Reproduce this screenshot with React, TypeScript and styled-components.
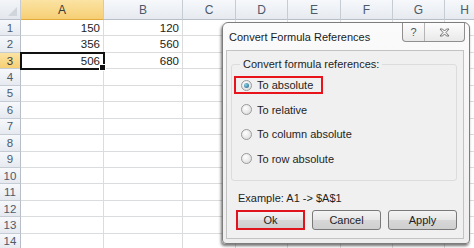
import React from "react";
import styled, { createGlobalStyle, css } from "styled-components";

const GlobalStyle = createGlobalStyle`
  html, body {
    margin: 0;
    padding: 0;
    background: #ffffff;
    overflow: hidden;
  }
  #root {
    width: 474px;
    height: 248px;
    position: relative;
    overflow: hidden;
  }
`;

const COLS = ["A", "B", "C", "D", "E", "F", "G", "H"];
const ROWS = 14;
const DATA: Record<string, string> = {
  A1: "150",
  B1: "120",
  A2: "356",
  B2: "560",
  A3: "506",
  B3: "680",
};

const Sheet = styled.div`
  display: grid;
  grid-template-columns: 21px 83px 79px 53px 52px 53px 52px 52px 40px;
  grid-template-rows: 20px repeat(${ROWS}, 16.45px);
  font-family: "Liberation Sans", Arial, sans-serif;
  font-size: 11px;
  color: #222;
`;

const headerBg = css<{ $active?: boolean }>`
  background: ${p =>
    p.$active
      ? "linear-gradient(#fbe3a4, #f6cf74)"
      : "linear-gradient(#f6f8fb, #e6eaf0)"};
  color: ${p => (p.$active ? "#3a3a3a" : "#4d5a6a")};
`;

const Corner = styled.div`
  background: linear-gradient(#f3f5f8, #e3e7ed);
  border-right: 1px solid #c6ccd4;
  border-bottom: 1px solid #b7bec8;
  position: relative;
  &::after {
    content: "";
    position: absolute;
    right: 3px;
    bottom: 3px;
    border-left: 9px solid transparent;
    border-bottom: 9px solid #d0d5dc;
  }
`;

const ColHead = styled.div<{ $active?: boolean }>`
  ${headerBg};
  display: flex;
  align-items: center;
  justify-content: center;
  font-size: 12px;
  border-right: 1px solid #c6ccd4;
  border-bottom: 1px solid ${p => (p.$active ? "#e3a93b" : "#b7bec8")};
`;

const RowHead = styled.div<{ $active?: boolean }>`
  ${headerBg};
  display: flex;
  align-items: center;
  justify-content: center;
  font-size: 11.5px;
  border-right: 1px solid ${p => (p.$active ? "#e3a93b" : "#b7bec8")};
  border-bottom: 1px solid #c6ccd4;
`;

const Cell = styled.div<{ $selected?: boolean }>`
  display: flex;
  align-items: center;
  justify-content: flex-end;
  padding-right: 3px;
  font-size: 11.5px;
  border-right: 1px solid #dadcdd;
  border-bottom: 1px solid #dadcdd;
  position: relative;
  ${p =>
    p.$selected &&
    css`
      outline: 2px solid #111;
      outline-offset: -1px;
      z-index: 1;
      &::after {
        content: "";
        position: absolute;
        right: -3px;
        bottom: -3px;
        width: 5px;
        height: 5px;
        background: #111;
        border: 1px solid #fff;
      }
    `}
`;

const Dialog = styled.div`
  position: absolute;
  left: 222px;
  top: 22px;
  width: 248px;
  height: 222px;
  box-sizing: border-box;
  border: 1px solid #7d7d7d;
  border-radius: 6px 6px 4px 4px;
  background: linear-gradient(#fbfbfb, #eeeeee);
  box-shadow: -1px 2px 3px rgba(0, 0, 0, 0.55);
  display: flex;
  flex-direction: column;
  padding: 0 5px 4px 3px;
  font-family: "Liberation Sans", Tahoma, sans-serif;
  font-size: 10.5px;
  color: #1e1e1e;
  z-index: 5;
`;

const TitleBar = styled.div`
  height: 26px;
  display: flex;
  align-items: center;
  justify-content: space-between;
  padding-left: 3px;
  padding-top: 1px;
`;

const Title = styled.span`
  font-size: 11px;
  color: #1a1a1a;
`;

const CaptionButtons = styled.div`
  align-self: flex-start;
  display: flex;
  margin-top: -1px;
  margin-right: -1px;
  border: 1px solid #8f8f8f;
  border-top: none;
  border-radius: 0 0 4px 4px;
  background: linear-gradient(#fdfdfd, #e9e9e9);
  height: 18px;
  overflow: hidden;
`;

const CaptionButton = styled.div<{ $wide?: boolean }>`
  width: ${p => (p.$wide ? "39px" : "21px")};
  display: flex;
  align-items: center;
  justify-content: center;
  color: #555;
  font-size: 11px;
  & + & {
    border-left: 1px solid #b5b5b5;
  }
`;

const Client = styled.div`
  flex: 1;
  background: #f0f0f0;
  border: 1px solid #c3c3c3;
  display: flex;
  flex-direction: column;
  padding: 7px 6px 8px 4px;
`;

const Group = styled.fieldset`
  margin: 0;
  padding: 3px 0 6px 2px;
  border: 1px solid #dcdcdc;
  border-radius: 3px;
  height: 112px;
  display: flex;
  flex-direction: column;
`;

const Legend = styled.legend`
  padding: 0 3px;
  margin-left: 6px;
  font-size: 11px;
  color: #1e1e1e;
`;

const Option = styled.label<{ $marked?: boolean }>`
  display: flex;
  align-items: center;
  gap: 5px;
  height: 18px;
  width: max-content;
  padding: 0 8px 0 5px;
  margin-top: 6.5px;
  font-size: 11px;
  box-sizing: border-box;
  border: 2px solid ${p => (p.$marked ? "#e8141c" : "transparent")};
  &:first-of-type {
    margin-top: 3px;
  }
`;

const Radio = styled.span<{ $checked?: boolean }>`
  width: 11px;
  height: 11px;
  border-radius: 50%;
  box-sizing: border-box;
  border: 1px solid #9a9a9a;
  background: radial-gradient(circle at 40% 35%, #ffffff, #d6d6d6);
  display: flex;
  align-items: center;
  justify-content: center;
  &::after {
    content: "";
    display: ${p => (p.$checked ? "block" : "none")};
    width: 5px;
    height: 5px;
    border-radius: 50%;
    background: radial-gradient(circle at 35% 35%, #8ad0e6, #1b5f83);
  }
`;

const Example = styled.div`
  margin: 11px 0 0 7px;
  height: 12px;
  line-height: 12px;
  font-size: 11px;
`;

const Buttons = styled.div`
  margin-top: auto;
  display: flex;
  gap: 7px;
  padding-left: 5px;
`;

const Button = styled.button<{ $marked?: boolean }>`
  width: 70px;
  height: 20px;
  box-sizing: border-box;
  font-family: inherit;
  font-size: 11px;
  color: #1e1e1e;
  border-radius: 3px;
  border: 1px solid #7a7a7a;
  background: linear-gradient(#f4f4f4 0%, #e6e6e6 50%, #d7d7d7 51%, #cfcfcf 100%);
  padding: 0;
  ${p =>
    p.$marked &&
    css`
      border: 2px solid #e0141c;
      border-radius: 0;
    `}
`;

const CloseGlyph = () => (
  <svg width="11" height="9" viewBox="0 0 11 9">
    <path
      d="M1 1 H3.5 L5.5 3 L7.5 1 H10 L7 4.5 L10 8 H7.5 L5.5 6 L3.5 8 H1 L4 4.5 Z"
      fill="none"
      stroke="#6a6a6a"
      strokeWidth="0.9"
    />
  </svg>
);

const options = ["To absolute", "To relative", "To column absolute", "To row absolute"];

export default function App() {
  const cells: React.ReactNode[] = [<Corner key="corner" />];
  COLS.forEach(c => cells.push(<ColHead key={c} $active={c === "A"}>{c}</ColHead>));
  for (let r = 1; r <= ROWS; r++) {
    cells.push(
      <RowHead key={`r${r}`} $active={r === 3}>
        {r}
      </RowHead>,
    );
    COLS.forEach(c => {
      const id = `${c}${r}`;
      cells.push(
        <Cell key={id} $selected={id === "A3"}>
          {DATA[id] || ""}
        </Cell>,
      );
    });
  }

  return (
    <>
      <GlobalStyle />
      <Sheet>{cells}</Sheet>
      <Dialog>
        <TitleBar>
          <Title>Convert Formula References</Title>
          <CaptionButtons>
            <CaptionButton>?</CaptionButton>
            <CaptionButton $wide>
              <CloseGlyph />
            </CaptionButton>
          </CaptionButtons>
        </TitleBar>
        <Client>
          <Group>
            <Legend>Convert formula references:</Legend>
            {options.map((o, i) => (
              <Option key={o} $marked={i === 0}>
                <Radio $checked={i === 0} />
                {o}
              </Option>
            ))}
          </Group>
          <Example>Example: A1 -&gt; $A$1</Example>
          <Buttons>
            <Button $marked>Ok</Button>
            <Button>Cancel</Button>
            <Button>Apply</Button>
          </Buttons>
        </Client>
      </Dialog>
    </>
  );
}
